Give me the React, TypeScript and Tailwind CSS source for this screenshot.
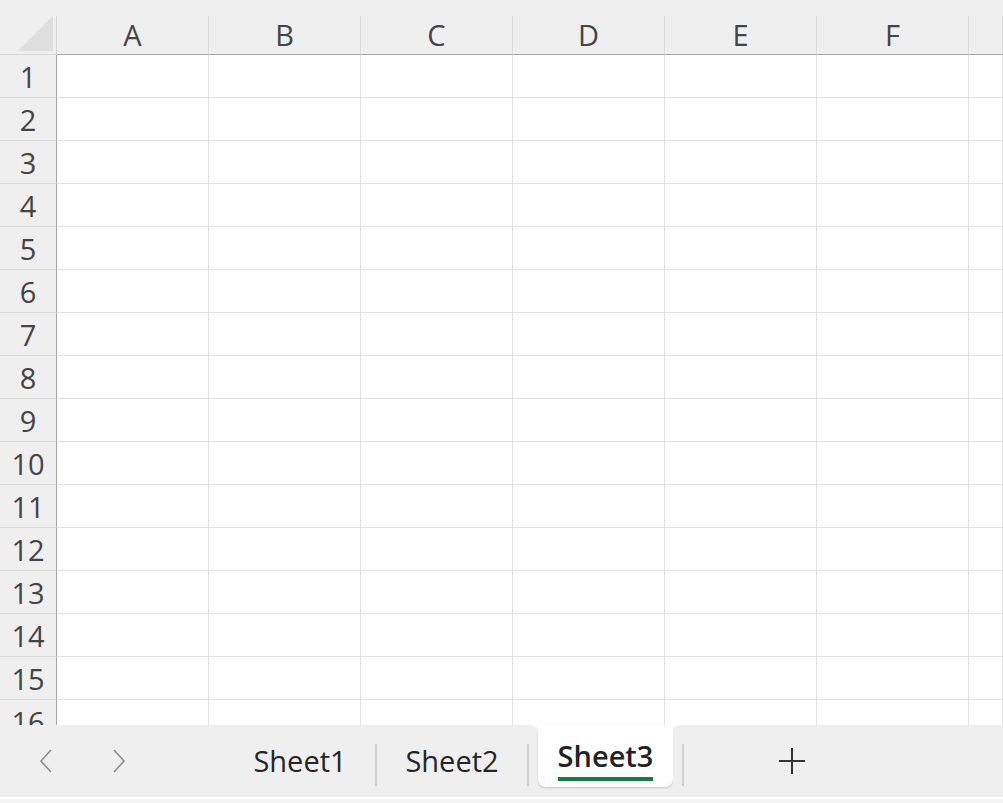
const columns = ['A', 'B', 'C', 'D', 'E', 'F', ''];
const rows = Array.from({ length: 16 }, (_, i) => i + 1);

const font = { fontFamily: '"Open Sans", "Noto Sans", sans-serif' };

function Corner() {
  return (
    <div className="h-[39px] border-r border-b border-[#d6d6d6] flex items-start">
      <svg width="36" height="36" viewBox="0 0 36 36" className="ml-[18px]">
        <polygon points="35,0 35,35 0,35" fill="#dedede" />
      </svg>
    </div>
  );
}

function Grid() {
  return (
    <div className="h-[725px] overflow-hidden bg-white">
      <div className="grid grid-cols-[57px_repeat(6,152px)_1fr] bg-[#efefef] pt-[16px]">
        <Corner />
        {columns.map((col, i) => (
          <div
            key={i}
            className="h-[39px] border-r border-r-[#d9d9d9] border-b border-b-[#a3a3a3] flex items-center justify-center text-[29px] leading-none text-[#444] pb-[2px]"
          >
            {col}
          </div>
        ))}
      </div>
      {rows.map((row) => (
        <div key={row} className="grid grid-cols-[57px_repeat(6,152px)_1fr] h-[43px]">
          <div className="bg-[#efefef] border-r border-r-[#a3a3a3] border-b border-b-[#d9d9d9] flex items-center justify-center text-[29px] leading-none text-[#444] pt-[1px]">
            {row}
          </div>
          {columns.map((_, i) => (
            <div key={i} className="border-r border-b border-[#e1e1e1]" />
          ))}
        </div>
      ))}
    </div>
  );
}

function Separator() {
  return <div className="w-[2px] h-[42px] bg-[#d0d0d0] mt-[7px]" />;
}

function TabBar() {
  return (
    <div className="flex h-[72px] bg-white">
      <div className="w-[538px] flex items-center bg-[#efefef] rounded-tr-[8px]">
        <div className="w-[92px] flex justify-center">
          <svg width="14" height="24" viewBox="0 0 14 24">
            <path d="M12 1 L2 12 L12 23" fill="none" stroke="#8c8c8c" strokeWidth="1.6" />
          </svg>
        </div>
        <div className="w-[54px] flex justify-center">
          <svg width="14" height="24" viewBox="0 0 14 24">
            <path d="M2 1 L12 12 L2 23" fill="none" stroke="#8c8c8c" strokeWidth="1.6" />
          </svg>
        </div>
        <div className="w-[79px]" />
        <div className="w-[150px] flex justify-center text-[29px] leading-none text-[#252525] pb-[2px]">Sheet1</div>
        <Separator />
        <div className="w-[150px] flex justify-center text-[29px] leading-none text-[#252525] pb-[2px]">Sheet2</div>
        <Separator />
      </div>
      <div className="w-[135px] bg-[#efefef]">
        <div className="h-[62px] bg-white rounded-b-[8px] shadow-[0_1px_2px_rgba(0,0,0,0.18)] flex justify-center">
          <div className="inline-flex flex-col mt-[16px]">
            <span className="text-[29px] leading-[30px] font-semibold text-[#222]">Sheet3</span>
            <div className="h-[4px] bg-[#187a43] mt-[6px]" />
          </div>
        </div>
      </div>
      <div className="flex-1 flex items-center bg-[#efefef] rounded-tl-[8px]">
        <div className="w-[9px]" />
        <Separator />
        <div className="w-[216px] flex justify-center">
          <svg width="26" height="26" viewBox="0 0 26 26">
            <path d="M13 0 V26 M0 13 H26" stroke="#333" strokeWidth="2" />
          </svg>
        </div>
      </div>
    </div>
  );
}

export default function App() {
  return (
    <div className="w-[1003px] h-[803px] overflow-hidden bg-[#efefef]" style={font}>
      <Grid />
      <TabBar />
      <div className="h-[2px] bg-white" />
      <div className="h-[4px] bg-[#f4f4f4]" />
    </div>
  );
}
